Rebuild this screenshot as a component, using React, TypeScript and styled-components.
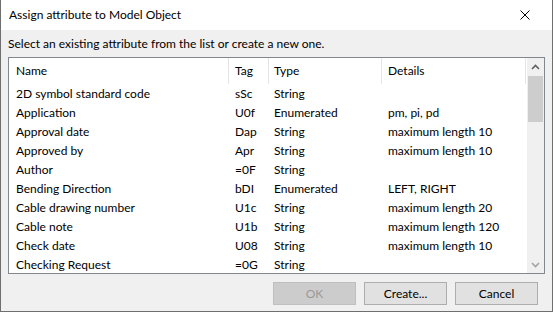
import React from "react";
import styled, { createGlobalStyle } from "styled-components";

const Global = createGlobalStyle`
  html, body { margin: 0; padding: 0; }
  body {
    background: #34485c;
    font-family: Lato, "Noto Sans", sans-serif;
    font-size: 12px;
    color: #000;
  }
  #root { width: 553px; height: 312px; }
`;

const Window = styled.div`
  width: 551px;
  height: 311px;
  display: flex;
  flex-direction: column;
  background: #f0f0f0;
  border-left: 1px solid #6f6f6f;
  border-right: 1px solid #6f6f6f;
  border-bottom: 1px solid #6f6f6f;
`;

const TitleBar = styled.div`
  height: 30px;
  flex: none;
  background: #fff;
  display: flex;
  align-items: center;
  justify-content: space-between;
  padding-left: 8px;
`;

const Title = styled.span`
  font-size: 12px;
  line-height: 16px;
  margin-top: -1px;
`;

const CloseButton = styled.div`
  width: 46px;
  height: 30px;
  display: flex;
  align-items: center;
  justify-content: center;
  margin-right: 4px;
`;

const Body = styled.div`
  flex: 1;
  display: flex;
  flex-direction: column;
  padding: 6px 7px 0 7px;
`;

const Prompt = styled.div`
  line-height: 16px;
  height: 16px;
`;

const ListBox = styled.div`
  margin: 5px 0 0 0;
  width: 535px;
  height: 215px;
  border: 1px solid #828790;
  background: #fff;
  display: flex;
`;

const ListContent = styled.div`
  width: 518px;
  overflow: hidden;
  display: flex;
  flex-direction: column;
`;

const Grid = styled.div`
  display: grid;
  grid-template-columns: 220px 40px 113px 144px;
`;

const HeaderCell = styled.div<{ $pad: number }>`
  height: 26px;
  line-height: 26px;
  padding-left: ${(p) => p.$pad}px;
  border-right: 1px solid #e5e5e5;
  white-space: nowrap;
`;

const Cell = styled.div<{ $pad: number }>`
  height: 19px;
  line-height: 19px;
  padding-left: ${(p) => p.$pad}px;
  white-space: nowrap;
  overflow: hidden;
`;

const ScrollBar = styled.div`
  width: 17px;
  flex: none;
  background: #f0f0f0;
  display: flex;
  flex-direction: column;
`;

const ArrowButton = styled.div`
  height: 17px;
  flex: none;
  display: flex;
  align-items: center;
  justify-content: center;
`;

const Track = styled.div`
  flex: 1;
  padding: 1px 1px 0 1px;
`;

const Thumb = styled.div`
  height: 46px;
  background: #cdcdcd;
`;

const ButtonRow = styled.div`
  display: flex;
  justify-content: flex-end;
  gap: 8px;
  margin-top: 8px;
  padding-right: 7px;
`;

const Button = styled.button<{ $disabled?: boolean }>`
  width: 83px;
  height: 23px;
  box-sizing: border-box;
  font-family: inherit;
  font-size: 12px;
  padding: 0;
  background: ${(p) => (p.$disabled ? "#cccccc" : "#e1e1e1")};
  border: 1px solid ${(p) => (p.$disabled ? "#bfbfbf" : "#adadad")};
  color: ${(p) => (p.$disabled ? "#9a9a9a" : "#000")};
`;

const rows = [
  ["2D symbol standard code", "sSc", "String", ""],
  ["Application", "U0f", "Enumerated", "pm, pi, pd"],
  ["Approval date", "Dap", "String", "maximum length 10"],
  ["Approved by", "Apr", "String", "maximum length 10"],
  ["Author", "=0F", "String", ""],
  ["Bending Direction", "bDI", "Enumerated", "LEFT, RIGHT"],
  ["Cable drawing number", "U1c", "String", "maximum length 20"],
  ["Cable note", "U1b", "String", "maximum length 120"],
  ["Check date", "U08", "String", "maximum length 10"],
  ["Checking Request", "=0G", "String", ""],
];

const pads = [7, 6, 5, 6];
const headers = ["Name", "Tag", "Type", "Details"];

export default function App() {
  return (
    <>
      <Global />
      <Window>
        <TitleBar>
          <Title>Assign attribute to Model Object</Title>
          <CloseButton>
            <svg width="10" height="10" viewBox="0 0 10 10">
              <path d="M0.5 0.5 L9.5 9.5 M9.5 0.5 L0.5 9.5" stroke="#000" strokeWidth="1" fill="none" />
            </svg>
          </CloseButton>
        </TitleBar>
        <Body>
          <Prompt>Select an existing attribute from the list or create a new one.</Prompt>
          <ListBox>
            <ListContent>
              <Grid>
                {headers.map((h, i) => (
                  <HeaderCell key={h} $pad={pads[i]}>
                    {h}
                  </HeaderCell>
                ))}
                {rows.map((r) =>
                  r.map((c, i) => (
                    <Cell key={r[0] + i} $pad={pads[i]}>
                      {c}
                    </Cell>
                  ))
                )}
              </Grid>
            </ListContent>
            <ScrollBar>
              <ArrowButton>
                <svg width="9" height="6" viewBox="0 0 9 6">
                  <path d="M1 5 L4.5 1.5 L8 5" stroke="#606060" strokeWidth="1.6" fill="none" />
                </svg>
              </ArrowButton>
              <Track>
                <Thumb />
              </Track>
              <ArrowButton>
                <svg width="9" height="6" viewBox="0 0 9 6">
                  <path d="M1 1 L4.5 4.5 L8 1" stroke="#a3a3a3" strokeWidth="1.6" fill="none" />
                </svg>
              </ArrowButton>
            </ScrollBar>
          </ListBox>
          <ButtonRow>
            <Button $disabled>OK</Button>
            <Button>Create...</Button>
            <Button>Cancel</Button>
          </ButtonRow>
        </Body>
      </Window>
    </>
  );
}
